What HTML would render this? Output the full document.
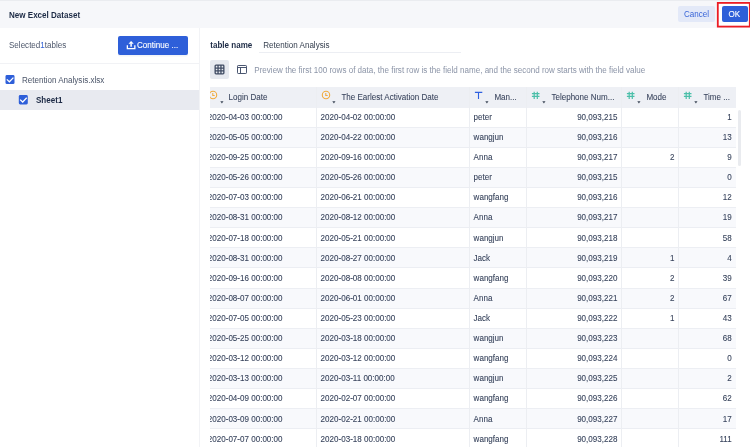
<!DOCTYPE html>
<html><head><meta charset="utf-8"><style>
*{box-sizing:border-box;margin:0;padding:0}
html,body{width:750px;height:447px;overflow:hidden;background:#fff;font-family:"Liberation Sans",sans-serif;font-size:8.05px;color:#333d4d}
#root{position:absolute;left:0;top:0;width:750px;height:447px;will-change:transform;overflow:hidden}
.t{position:absolute;white-space:nowrap;line-height:9px;transform:scaleY(1.15);transform-origin:0 7.3px}
#topline{position:absolute;left:0;top:0;width:750px;height:1px;background:#eaecf0}
#hdr{position:absolute;left:0;top:1px;width:750px;height:26.7px;background:#f6f7fa}
#title{left:9px;top:10.5px;font-weight:700;color:#1c2a45}
#cancel{position:absolute;left:678px;top:6.3px;width:37.3px;height:16px;background:#e3e9f8;border-radius:2px}
#cancelt{left:684px;top:10px;color:#3a66d8}
#redbox{position:absolute;left:716.9px;top:1.9px;width:33.1px;height:25.6px;border:2px solid #ee1c24;background:#fff}
#ok{position:absolute;left:721.7px;top:6.2px;width:26px;height:16px;background:#2e5fd9;border-radius:2px}
#okt{left:728.5px;top:10.4px;color:#fff;-webkit-text-stroke:0.1px #fff}
#vsep{position:absolute;left:199px;top:27.7px;width:1px;height:420px;background:#f2f3f6}
#sel{left:9px;top:40.6px;color:#4e586c}
#sel b{font-weight:400;color:#3463d6}
#cont{position:absolute;left:118.2px;top:36px;width:69.8px;height:18.8px;background:#2e5fd9;border-radius:2px;box-shadow:0 1.5px 0 #f1f3f8}
#contt{left:137px;top:41px;color:#fff;-webkit-text-stroke:0.1px #fff}
#hsep{position:absolute;left:0;top:62.6px;width:198.6px;height:1px;background:#f1f2f5}
.cb{position:absolute;width:9.2px;height:9.3px;background:#2e5fd9;border-radius:1.5px}
#item1{left:22px;top:75.9px;color:#4a5468}
#sheetrow{position:absolute;left:0;top:89.6px;width:198.6px;height:20.2px;background:#e8eaf0}
#sheet1{left:36px;top:96.1px;font-weight:700;color:#1c2a45}
#tn{left:210.3px;top:41px;font-weight:700;color:#1c2a45}
#tnv{left:263.3px;top:40.8px;color:#333d4d}
#tnl{position:absolute;left:259px;top:52px;width:202px;height:1px;background:#eceef3}
#gridbox{position:absolute;left:210px;top:60px;width:18.8px;height:18.8px;background:#e6e9ef;border-radius:2px}
#preview{left:254.3px;top:66px;color:#8b94a7}
#table{position:absolute;left:210px;top:87px;width:526px;height:360px;overflow:hidden}
.hbg{position:absolute;left:0;top:0;width:526px;background:#eef0f5}
.hic{position:absolute;width:10px;height:10px}
.ic{display:block}
.tri{position:absolute;width:4px;height:3px}
.ht{color:#36415a;-webkit-text-stroke:0.05px #36415a}
.row{position:absolute;left:0;width:526px;border-bottom:1px solid #eceef3}
.odd{background:#fff}
.even{background:#f8f9fc}
.dc{color:#35415a;-webkit-text-stroke:0.08px #35415a}
.vs{position:absolute;top:0;width:1px;height:400px;background:#eceef2}
#scroll{position:absolute;left:737.5px;top:110px;width:3.8px;height:56.3px;background:#e9ebef;border-radius:2px}
</style></head><body><div id="root">
<div id="topline"></div>
<div id="hdr"></div>
<span class="t" id="title">New Excel Dataset</span>
<div id="cancel"></div><span class="t" id="cancelt">Cancel</span>
<svg style="position:absolute;left:700px;top:0" width="50" height="30" viewBox="0 0 50 30"><rect x="17.8" y="2.9" width="32" height="23.7" fill="#fff" stroke="#ec1c24" stroke-width="1.8"/></svg>
<div id="ok"></div><span class="t" id="okt">OK</span>
<div id="vsep"></div>
<span class="t" id="sel">Selected<b>1</b>tables</span>
<div id="cont"><svg style="position:absolute;left:7.8px;top:4px" width="10" height="10" viewBox="0 0 10 10"><path d="M1.35 5.2V8.7H8.85V5.2" fill="none" stroke="#fff" stroke-width="1.3"/><path d="M5.1 3.4V6.7" fill="none" stroke="#fff" stroke-width="1.5"/><path d="M2.5 3.8L5.1 0.9 7.7 3.8z" fill="#fff"/></svg></div><span class="t" id="contt">Continue ...</span>
<div id="hsep"></div>
<svg style="position:absolute;left:4px;top:74px" width="12" height="12" viewBox="0 0 12 12"><rect x="1.5" y="1" width="9" height="9.1" rx="1.4" fill="#2e5fd9"/><path d="M2.8 5.4L5.4 7.8 9.4 3.6" fill="none" stroke="#fff" stroke-width="1.25"/></svg>
<span class="t" id="item1">Retention Analysis.xlsx</span>
<div id="sheetrow"></div>
<svg style="position:absolute;left:18px;top:94px" width="12" height="12" viewBox="0 0 12 12"><rect x="0.8" y="1.1" width="9" height="9.4" rx="1.4" fill="#2e5fd9"/><path d="M2.1 5.6L4.7 8 8.7 3.8" fill="none" stroke="#fff" stroke-width="1.25"/></svg>
<span class="t" id="sheet1">Sheet1</span>
<span class="t" id="tn">table name</span>
<span class="t" id="tnv">Retention Analysis</span>
<div id="tnl"></div>
<div id="gridbox"></div>
<svg style="position:absolute;left:214.2px;top:63.9px" width="11" height="11" viewBox="0 0 11 11"><rect x="1.15" y="1.15" width="8.7" height="8.7" rx="0.8" fill="none" stroke="#3f4b63" stroke-width="1.3"/><path d="M4.05 1v9M6.95 1v9M1 4.05h9M1 6.95h9" fill="none" stroke="#3f4b63" stroke-width="1.3"/></svg>
<svg style="position:absolute;left:236px;top:64px" width="12" height="12" viewBox="0 0 12 12"><rect x="1.5" y="1.5" width="9" height="8" rx="0.7" fill="none" stroke="#4a5670" stroke-width="1"/><path d="M1.5 3.5h9M4.5 3.5v6.5" fill="none" stroke="#4a5670" stroke-width="1"/></svg>
<span class="t" id="preview">Preview the first 100 rows of data, the first row is the field name, and the second row starts with the field value</span>
<div id="table">
<div class="hbg" style="height:20.8px"></div>
<div class="row odd" style="top:20.50px;height:20.12px"></div>
<div class="row even" style="top:40.62px;height:20.12px"></div>
<div class="row odd" style="top:60.74px;height:20.12px"></div>
<div class="row even" style="top:80.86px;height:20.12px"></div>
<div class="row odd" style="top:100.98px;height:20.12px"></div>
<div class="row even" style="top:121.10px;height:20.12px"></div>
<div class="row odd" style="top:141.22px;height:20.12px"></div>
<div class="row even" style="top:161.34px;height:20.12px"></div>
<div class="row odd" style="top:181.46px;height:20.12px"></div>
<div class="row even" style="top:201.58px;height:20.12px"></div>
<div class="row odd" style="top:221.70px;height:20.12px"></div>
<div class="row even" style="top:241.82px;height:20.12px"></div>
<div class="row odd" style="top:261.94px;height:20.12px"></div>
<div class="row even" style="top:282.06px;height:20.12px"></div>
<div class="row odd" style="top:302.18px;height:20.12px"></div>
<div class="row even" style="top:322.30px;height:20.12px"></div>
<div class="row odd" style="top:342.42px;height:20.12px"></div>
<div class="vs" style="left:106.2px"></div>
<div class="vs" style="left:259.2px"></div>
<div class="vs" style="left:316.2px"></div>
<div class="vs" style="left:411.2px"></div>
<div class="vs" style="left:468.2px"></div>
<span class="hic" style="left:-1.8px;top:3.0px"><svg class="ic" width="10" height="10" viewBox="0 0 10 10"><circle cx="5" cy="5" r="3.7" fill="none" stroke="#f1ab3e" stroke-width="1.1"/><path d="M4.8 3.0v2.5h1.9" fill="none" stroke="#f1ab3e" stroke-width="1.05"/></svg></span><svg class="tri" style="left:9.5px;top:13.9px" width="4" height="3" viewBox="0 0 4 3"><path d="M0.3 0.3H3.5L1.9 2.5z" fill="#3d4757"/></svg><span class="t ht" style="left:18.6px;top:5.6px">Login Date</span>
<span class="hic" style="left:111.0px;top:3.0px"><svg class="ic" width="10" height="10" viewBox="0 0 10 10"><circle cx="5" cy="5" r="3.7" fill="none" stroke="#f1ab3e" stroke-width="1.1"/><path d="M4.8 3.0v2.5h1.9" fill="none" stroke="#f1ab3e" stroke-width="1.05"/></svg></span><svg class="tri" style="left:122.3px;top:13.9px" width="4" height="3" viewBox="0 0 4 3"><path d="M0.3 0.3H3.5L1.9 2.5z" fill="#3d4757"/></svg><span class="t ht" style="left:131.4px;top:5.6px">The Earlest Activation Date</span>
<span class="hic" style="left:264.0px;top:3.0px"><svg class="ic" width="10" height="10" viewBox="0 0 10 10"><path d="M0.9 2.4h7.4M4.5 2.4v6.6" fill="none" stroke="#2f60e0" stroke-width="1.1"/></svg></span><svg class="tri" style="left:275.3px;top:13.9px" width="4" height="3" viewBox="0 0 4 3"><path d="M0.3 0.3H3.5L1.9 2.5z" fill="#3d4757"/></svg><span class="t ht" style="left:284.4px;top:5.6px">Man...</span>
<span class="hic" style="left:321.0px;top:3.0px"><svg class="ic" width="10" height="10" viewBox="0 0 10 10"><path d="M3.2 1.7v7.2M6.3 1.7v7.2M0.9 3.7h7.6M0.9 6.4h7.6" fill="none" stroke="#4bbfa9" stroke-width="1.2"/></svg></span><svg class="tri" style="left:332.3px;top:13.9px" width="4" height="3" viewBox="0 0 4 3"><path d="M0.3 0.3H3.5L1.9 2.5z" fill="#3d4757"/></svg><span class="t ht" style="left:341.4px;top:5.6px">Telephone Num...</span>
<span class="hic" style="left:416.0px;top:3.0px"><svg class="ic" width="10" height="10" viewBox="0 0 10 10"><path d="M3.2 1.7v7.2M6.3 1.7v7.2M0.9 3.7h7.6M0.9 6.4h7.6" fill="none" stroke="#4bbfa9" stroke-width="1.2"/></svg></span><svg class="tri" style="left:427.3px;top:13.9px" width="4" height="3" viewBox="0 0 4 3"><path d="M0.3 0.3H3.5L1.9 2.5z" fill="#3d4757"/></svg><span class="t ht" style="left:436.4px;top:5.6px">Mode</span>
<span class="hic" style="left:473.0px;top:3.0px"><svg class="ic" width="10" height="10" viewBox="0 0 10 10"><path d="M3.2 1.7v7.2M6.3 1.7v7.2M0.9 3.7h7.6M0.9 6.4h7.6" fill="none" stroke="#4bbfa9" stroke-width="1.2"/></svg></span><svg class="tri" style="left:484.3px;top:13.9px" width="4" height="3" viewBox="0 0 4 3"><path d="M0.3 0.3H3.5L1.9 2.5z" fill="#3d4757"/></svg><span class="t ht" style="left:493.4px;top:5.6px">Time ...</span>
<span class="t dc" style="left:-2.2px;top:25.80px">2020-04-03 00:00:00</span>
<span class="t dc" style="left:110.6px;top:25.80px">2020-04-02 00:00:00</span>
<span class="t dc" style="left:263.6px;top:25.80px">peter</span>
<span class="t dc" style="right:118.6px;top:25.80px">90,093,215</span>
<span class="t dc" style="right:4.4px;top:25.80px">1</span>
<span class="t dc" style="left:-2.2px;top:45.92px">2020-05-05 00:00:00</span>
<span class="t dc" style="left:110.6px;top:45.92px">2020-04-22 00:00:00</span>
<span class="t dc" style="left:263.6px;top:45.92px">wangjun</span>
<span class="t dc" style="right:118.6px;top:45.92px">90,093,216</span>
<span class="t dc" style="right:4.4px;top:45.92px">13</span>
<span class="t dc" style="left:-2.2px;top:66.04px">2020-09-25 00:00:00</span>
<span class="t dc" style="left:110.6px;top:66.04px">2020-09-16 00:00:00</span>
<span class="t dc" style="left:263.6px;top:66.04px">Anna</span>
<span class="t dc" style="right:118.6px;top:66.04px">90,093,217</span>
<span class="t dc" style="right:61.6px;top:66.04px">2</span>
<span class="t dc" style="right:4.4px;top:66.04px">9</span>
<span class="t dc" style="left:-2.2px;top:86.16px">2020-05-26 00:00:00</span>
<span class="t dc" style="left:110.6px;top:86.16px">2020-05-26 00:00:00</span>
<span class="t dc" style="left:263.6px;top:86.16px">peter</span>
<span class="t dc" style="right:118.6px;top:86.16px">90,093,215</span>
<span class="t dc" style="right:4.4px;top:86.16px">0</span>
<span class="t dc" style="left:-2.2px;top:106.28px">2020-07-03 00:00:00</span>
<span class="t dc" style="left:110.6px;top:106.28px">2020-06-21 00:00:00</span>
<span class="t dc" style="left:263.6px;top:106.28px">wangfang</span>
<span class="t dc" style="right:118.6px;top:106.28px">90,093,216</span>
<span class="t dc" style="right:4.4px;top:106.28px">12</span>
<span class="t dc" style="left:-2.2px;top:126.40px">2020-08-31 00:00:00</span>
<span class="t dc" style="left:110.6px;top:126.40px">2020-08-12 00:00:00</span>
<span class="t dc" style="left:263.6px;top:126.40px">Anna</span>
<span class="t dc" style="right:118.6px;top:126.40px">90,093,217</span>
<span class="t dc" style="right:4.4px;top:126.40px">19</span>
<span class="t dc" style="left:-2.2px;top:146.52px">2020-07-18 00:00:00</span>
<span class="t dc" style="left:110.6px;top:146.52px">2020-05-21 00:00:00</span>
<span class="t dc" style="left:263.6px;top:146.52px">wangjun</span>
<span class="t dc" style="right:118.6px;top:146.52px">90,093,218</span>
<span class="t dc" style="right:4.4px;top:146.52px">58</span>
<span class="t dc" style="left:-2.2px;top:166.64px">2020-08-31 00:00:00</span>
<span class="t dc" style="left:110.6px;top:166.64px">2020-08-27 00:00:00</span>
<span class="t dc" style="left:263.6px;top:166.64px">Jack</span>
<span class="t dc" style="right:118.6px;top:166.64px">90,093,219</span>
<span class="t dc" style="right:61.6px;top:166.64px">1</span>
<span class="t dc" style="right:4.4px;top:166.64px">4</span>
<span class="t dc" style="left:-2.2px;top:186.76px">2020-09-16 00:00:00</span>
<span class="t dc" style="left:110.6px;top:186.76px">2020-08-08 00:00:00</span>
<span class="t dc" style="left:263.6px;top:186.76px">wangfang</span>
<span class="t dc" style="right:118.6px;top:186.76px">90,093,220</span>
<span class="t dc" style="right:61.6px;top:186.76px">2</span>
<span class="t dc" style="right:4.4px;top:186.76px">39</span>
<span class="t dc" style="left:-2.2px;top:206.88px">2020-08-07 00:00:00</span>
<span class="t dc" style="left:110.6px;top:206.88px">2020-06-01 00:00:00</span>
<span class="t dc" style="left:263.6px;top:206.88px">Anna</span>
<span class="t dc" style="right:118.6px;top:206.88px">90,093,221</span>
<span class="t dc" style="right:61.6px;top:206.88px">2</span>
<span class="t dc" style="right:4.4px;top:206.88px">67</span>
<span class="t dc" style="left:-2.2px;top:227.00px">2020-07-05 00:00:00</span>
<span class="t dc" style="left:110.6px;top:227.00px">2020-05-23 00:00:00</span>
<span class="t dc" style="left:263.6px;top:227.00px">Jack</span>
<span class="t dc" style="right:118.6px;top:227.00px">90,093,222</span>
<span class="t dc" style="right:61.6px;top:227.00px">1</span>
<span class="t dc" style="right:4.4px;top:227.00px">43</span>
<span class="t dc" style="left:-2.2px;top:247.12px">2020-05-25 00:00:00</span>
<span class="t dc" style="left:110.6px;top:247.12px">2020-03-18 00:00:00</span>
<span class="t dc" style="left:263.6px;top:247.12px">wangjun</span>
<span class="t dc" style="right:118.6px;top:247.12px">90,093,223</span>
<span class="t dc" style="right:4.4px;top:247.12px">68</span>
<span class="t dc" style="left:-2.2px;top:267.24px">2020-03-12 00:00:00</span>
<span class="t dc" style="left:110.6px;top:267.24px">2020-03-12 00:00:00</span>
<span class="t dc" style="left:263.6px;top:267.24px">wangfang</span>
<span class="t dc" style="right:118.6px;top:267.24px">90,093,224</span>
<span class="t dc" style="right:4.4px;top:267.24px">0</span>
<span class="t dc" style="left:-2.2px;top:287.36px">2020-03-13 00:00:00</span>
<span class="t dc" style="left:110.6px;top:287.36px">2020-03-11 00:00:00</span>
<span class="t dc" style="left:263.6px;top:287.36px">wangjun</span>
<span class="t dc" style="right:118.6px;top:287.36px">90,093,225</span>
<span class="t dc" style="right:4.4px;top:287.36px">2</span>
<span class="t dc" style="left:-2.2px;top:307.48px">2020-04-09 00:00:00</span>
<span class="t dc" style="left:110.6px;top:307.48px">2020-02-07 00:00:00</span>
<span class="t dc" style="left:263.6px;top:307.48px">wangfang</span>
<span class="t dc" style="right:118.6px;top:307.48px">90,093,226</span>
<span class="t dc" style="right:4.4px;top:307.48px">62</span>
<span class="t dc" style="left:-2.2px;top:327.60px">2020-03-09 00:00:00</span>
<span class="t dc" style="left:110.6px;top:327.60px">2020-02-21 00:00:00</span>
<span class="t dc" style="left:263.6px;top:327.60px">Anna</span>
<span class="t dc" style="right:118.6px;top:327.60px">90,093,227</span>
<span class="t dc" style="right:4.4px;top:327.60px">17</span>
<span class="t dc" style="left:-2.2px;top:347.72px">2020-07-07 00:00:00</span>
<span class="t dc" style="left:110.6px;top:347.72px">2020-03-18 00:00:00</span>
<span class="t dc" style="left:263.6px;top:347.72px">wangfang</span>
<span class="t dc" style="right:118.6px;top:347.72px">90,093,228</span>
<span class="t dc" style="right:4.4px;top:347.72px">111</span>
</div>
<div id="scroll"></div>
</div></body></html>
